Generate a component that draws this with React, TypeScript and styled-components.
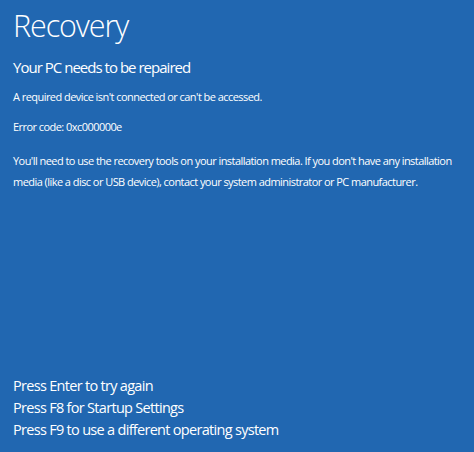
import React from "react";
import styled, { createGlobalStyle } from "styled-components";

const Global = createGlobalStyle`
  html, body { margin: 0; padding: 0; background: #2167b1; }
  body { font-family: "Open Sans", "Noto Sans", sans-serif; color: #ffffff; }
`;

const Screen = styled.main`
  box-sizing: border-box;
  width: 474px;
  height: 452px;
  background: #2167b1;
  padding: 5px 6px 11px 13px;
  display: flex;
  flex-direction: column;
  justify-content: space-between;
  overflow: hidden;
`;

const Top = styled.section`
  display: flex;
  flex-direction: column;
`;

const Title = styled.h1`
  margin: 0;
  font-weight: 300;
  font-size: 30.5px;
  line-height: 40px;
  letter-spacing: -1.1px;
`;

const Subtitle = styled.h2`
  margin: 12px 0 0 0;
  font-weight: 400;
  font-size: 15px;
  line-height: 20px;
  letter-spacing: -0.98px;
`;

const Text = styled.p<{ $gap: number }>`
  margin: ${(p) => p.$gap}px 0 0 0;
  font-size: 11px;
  line-height: 21px;
  letter-spacing: -0.55px;
`;

const Options = styled.ul`
  list-style: none;
  margin: 0;
  padding: 0;
  display: flex;
  flex-direction: column;
`;

const Option = styled.li`
  font-size: 14.5px;
  line-height: 22px;
  letter-spacing: -0.7px;
`;

export default function App() {
  return (
    <>
      <Global />
      <Screen>
        <Top>
          <Title>Recovery</Title>
          <Subtitle>Your PC needs to be repaired</Subtitle>
          <Text $gap={9}>A required device isn't connected or can't be accessed.</Text>
          <Text $gap={9}>Error code: 0xc000000e</Text>
          <Text $gap={13}>
            You'll need to use the recovery tools on your installation media. If you don't have any installation media (like a disc or USB device), contact your system administrator or PC manufacturer.
          </Text>
        </Top>
        <Options>
          <Option>Press Enter to try again</Option>
          <Option>Press F8 for Startup Settings</Option>
          <Option>Press F9 to use a different operating system</Option>
        </Options>
      </Screen>
    </>
  );
}
